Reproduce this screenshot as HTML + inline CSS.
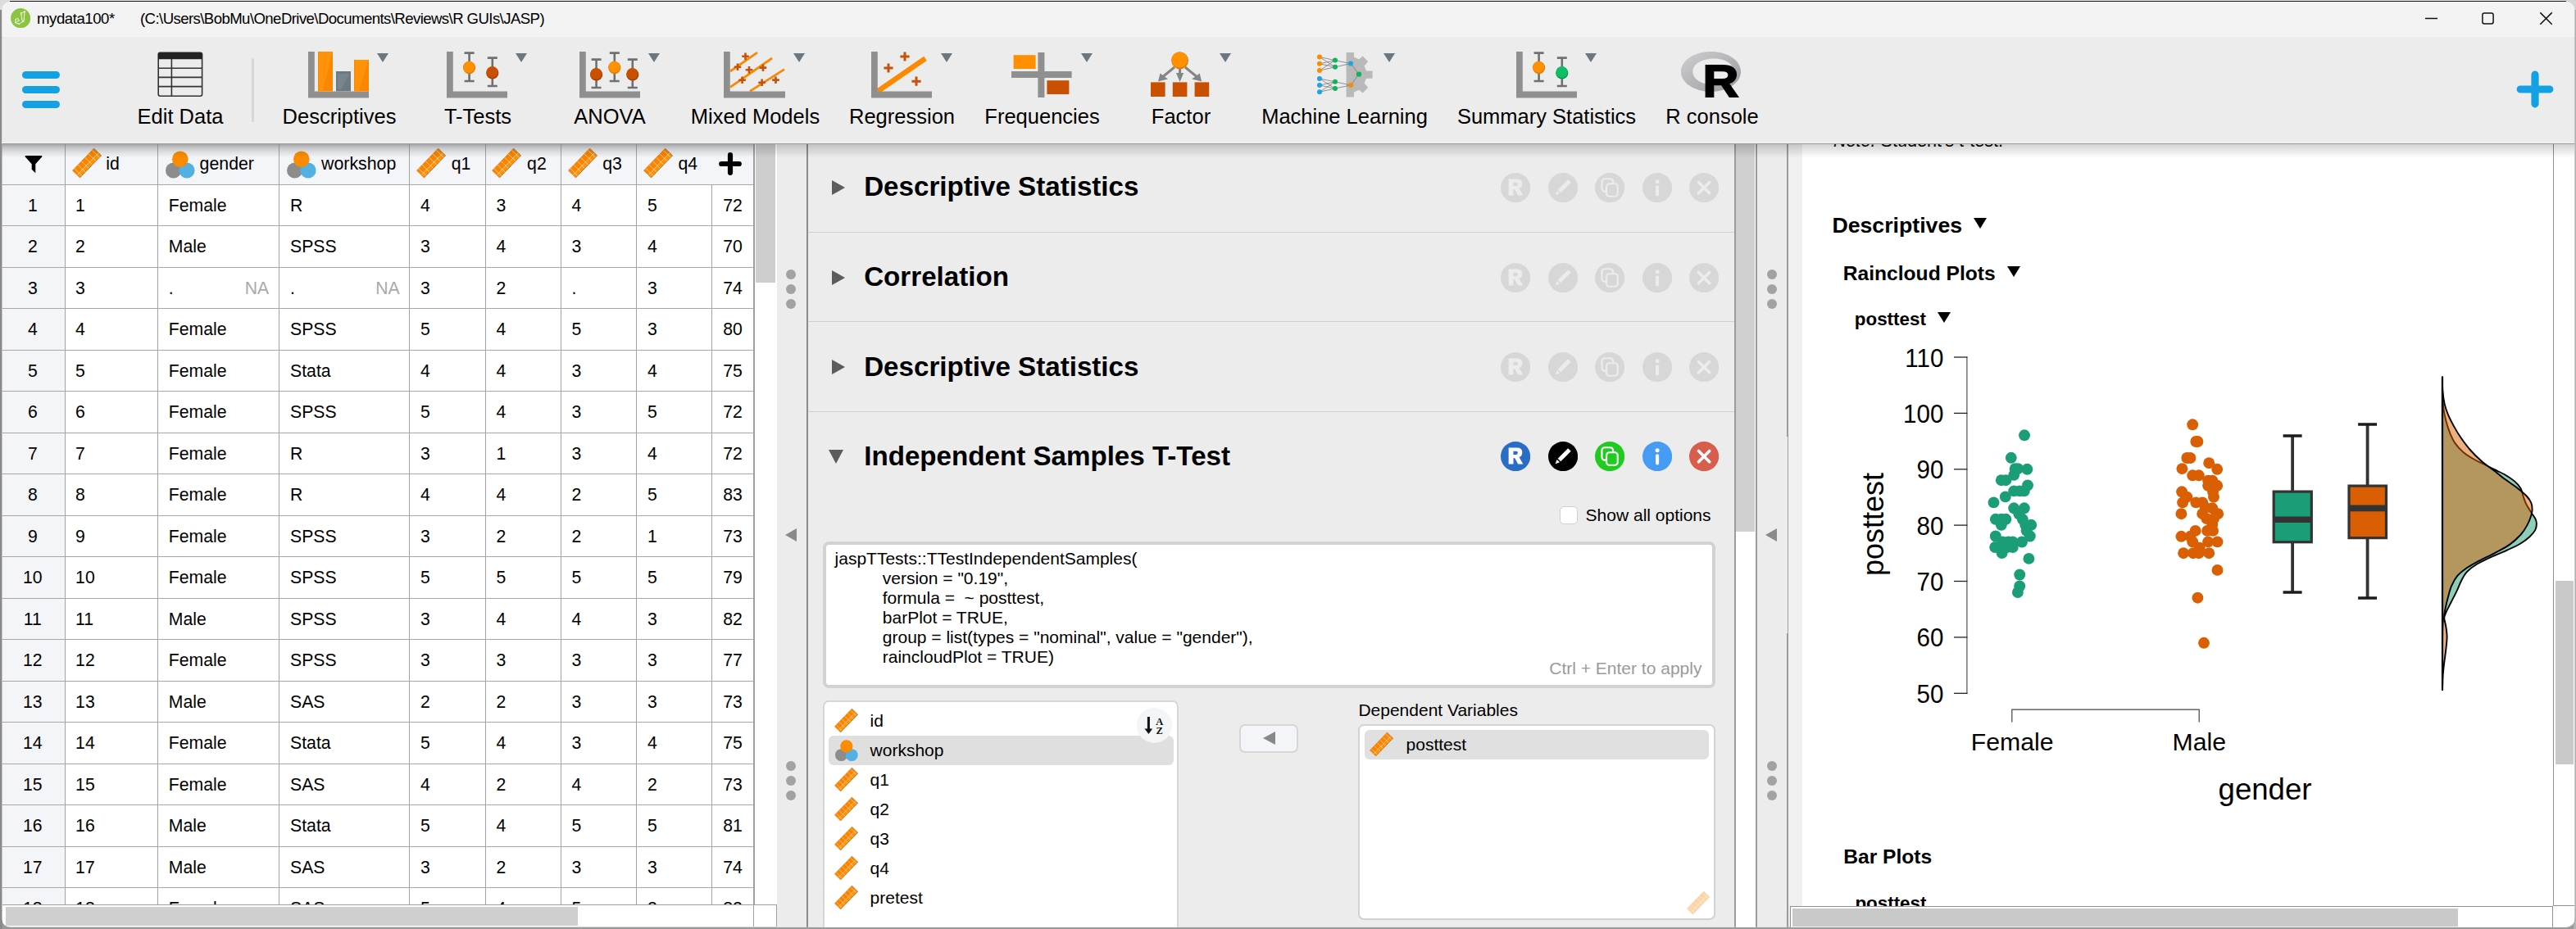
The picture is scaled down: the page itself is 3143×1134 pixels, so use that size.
<!DOCTYPE html>
<html><head><meta charset="utf-8"><title>JASP</title>
<style>
*{box-sizing:border-box;margin:0;padding:0}
html,body{width:3143px;height:1134px;overflow:hidden;background:#9a9a9a;font-family:"Liberation Sans",sans-serif;color:#000}
#win{position:absolute;left:0;top:0;width:3143px;height:1134px;background:#ececec;clip-path:inset(2.1px 1.8px 2.3px 2.4px round 10px);overflow:hidden}
.abs{position:absolute}
svg{display:block}
/* title bar */
#title{position:absolute;left:0;top:0;width:3143px;height:44.7px;background:#f3f3f3}
#title .t{position:absolute;top:11.5px;font-size:18.6px;line-height:22px;white-space:nowrap;color:#000;letter-spacing:-0.45px}
/* ribbon */
#ribbon{position:absolute;left:0;top:46px;width:3143px;height:130.2px;background:#ececec;border-bottom:1.2px solid #999}
.rl{position:absolute;top:81.2px;font-size:25.5px;line-height:30px;white-space:nowrap;transform:translateX(-50%)}
.ri{position:absolute;top:17px}
.tri{position:absolute;top:19.2px;width:0;height:0;border-left:7.6px solid transparent;border-right:7.6px solid transparent;border-top:11.6px solid #6b7882}
/* data */
#data{position:absolute;left:3px;top:176px;width:916.4px;height:928.3px;overflow:hidden;background:#fff}
#data .th{position:absolute;top:0;height:49.2px;background:linear-gradient(#c9cacc 0,#e4e5e8 5px,#f1f2f5 11px,#f4f5f8 16px)}
#data .ico{position:absolute}
#data .hl{position:absolute;top:12px;font-size:21.3px;line-height:24px;white-space:nowrap}
#data .vl{position:absolute;width:1.35px;background:#a3a3a3}
#data .tr{position:absolute;left:0;width:916.4px;height:50.5px;border-top:1.3px solid #a6a6a6}
#data .rn{position:absolute;left:0;top:0;width:76.4px;height:50px;background:#f4f5f8;text-align:center;padding-right:2.8px;font-size:21.2px;line-height:49.8px}
#data .td{position:absolute;top:0;height:50px;padding-left:12.3px;font-size:21.2px;line-height:49.8px;white-space:nowrap}
#data .td.last{padding-left:14.6px}
#data .na{position:absolute;right:12px;top:0;color:#a9a9a9}
.spl{background:#ececec}
.spl i{position:absolute;left:11.4px;width:12px;height:12px;border-radius:6px;background:#a2a2a2}
.spl b{position:absolute;left:9.6px;width:0;height:0;border-top:8.2px solid transparent;border-bottom:8.2px solid transparent;border-right:14.2px solid #8a8a8a}
/* analysis */
#ana{position:absolute;left:985.6px;top:176px;width:1131px;height:958px;background:#ececec;overflow:hidden}
#ana .sec{position:absolute;left:0;width:1131px;height:109.4px;border-bottom:1.5px solid #cfcfcf}
#ana .ttl{position:absolute;left:68.6px;font-size:33.15px;font-weight:bold;line-height:40px;white-space:nowrap}
.tr-r{position:absolute;width:0;height:0;border-top:9.3px solid transparent;border-bottom:9.3px solid transparent;border-left:16.4px solid #5c5c5c}
.tr-d{position:absolute;width:0;height:0;border-left:9.3px solid transparent;border-right:9.3px solid transparent;border-top:17.6px solid #5c5c5c}
.cb{position:absolute;width:36.2px;height:36.2px}
.code{position:absolute;font-size:21px;line-height:24px;white-space:pre}
.vitem{position:absolute;font-size:21px;line-height:24px;white-space:nowrap}
/* results */
#res{position:absolute;left:2182.4px;top:176px;width:933px;height:930.2px;background:#fff;overflow:hidden}
#res .note{left:54.6px;top:-16.2px;font-size:21.6px;line-height:24px;white-space:nowrap}
#res .h1{font-size:26.7px;font-weight:bold;line-height:32px;white-space:nowrap}
#res .h2{font-size:24.6px;font-weight:bold;line-height:30px;white-space:nowrap}
#res .h3{font-size:22.4px;font-weight:bold;line-height:28px;white-space:nowrap}
.tdn{position:absolute;width:0;height:0;border-left:8.4px solid transparent;border-right:8.4px solid transparent;border-top:13px solid #000}

</style></head>
<body>
<svg width="0" height="0" style="position:absolute">
<defs>
<linearGradient id="rg" x1="0" y1="0" x2="1" y2="0"><stop offset="0" stop-color="#ff9a1f"/><stop offset="1" stop-color="#f07c00"/></linearGradient>
<symbol id="ruler" viewBox="0 0 36 36">
 <g transform="rotate(-46 18 18)">
  <rect x="-0.8" y="11.7" width="37.6" height="12.6" fill="#fa8400"/>
  <rect x="-0.8" y="19.6" width="37.6" height="4.7" fill="#ff9106"/>
  <path d="M2.6 11.7V24.3M8.8 11.7V24.3M15 11.7V24.3M21.2 11.7V24.3M27.4 11.7V24.3M33.6 11.7V24.3M-0.8 19.6H36.8" stroke="#fff" stroke-opacity=".62" stroke-width="0.85" fill="none"/>
  <path d="M36.8 11.7V24.3H-0.8" stroke="#5a5a5a" stroke-opacity=".55" stroke-width="0.9" fill="none"/>
  <path d="M-0.8 24.3V11.7H36.8" stroke="#e07600" stroke-opacity=".7" stroke-width="0.7" fill="none"/>
 </g>
</symbol>
<symbol id="nom" viewBox="0 0 36 34">
 <circle cx="9.6" cy="24" r="9.6" fill="#8c8c8c"/>
 <circle cx="26" cy="24" r="9.6" fill="#52b1e2"/>
 <circle cx="17.8" cy="10.2" r="9.8" fill="#fb8c00"/>
</symbol>

<symbol id="bR" viewBox="0 0 36 36"><circle cx="18" cy="18" r="18" fill="var(--bg)"/><path d="M9.6 7.4H19.8Q26.2 7.4 26.2 13.2Q26.2 17.6 22.4 19L27.2 27.4H21L17.2 20.2H15.4V27.4H9.6ZM15.4 11.6V15.8H18.8Q20.8 15.8 20.8 13.7Q20.8 11.6 18.8 11.6Z" fill="var(--fg)" fill-rule="evenodd"/></symbol>
<symbol id="bE" viewBox="0 0 36 36"><circle cx="18" cy="18" r="18" fill="var(--bg)"/><path d="M24 8.2L27.6 11.8L15.2 24.2L11.6 20.6ZM10.6 21.8L14 25.2L8.6 27Z" fill="var(--fg)"/></symbol>
<symbol id="bC" viewBox="0 0 36 36"><circle cx="18" cy="18" r="18" fill="var(--bg)"/><rect x="8.4" y="7.2" width="13.6" height="15.4" rx="3.6" fill="none" stroke="var(--fg)" stroke-width="2.2"/><rect x="14" y="13.2" width="13.6" height="15.4" rx="3.6" fill="var(--bg)" stroke="var(--fg)" stroke-width="2.2"/></symbol>
<symbol id="bI" viewBox="0 0 36 36"><circle cx="18" cy="18" r="18" fill="var(--bg)"/><circle cx="18" cy="10.6" r="2.5" fill="var(--fg)"/><rect x="16" y="15.2" width="4" height="13.2" rx="2" fill="var(--fg)"/></symbol>
<symbol id="bX" viewBox="0 0 36 36"><circle cx="18" cy="18" r="18" fill="var(--bg)"/><path d="M11.4 11.4L24.6 24.6M24.6 11.4L11.4 24.6" stroke="var(--fg)" stroke-width="3.6" stroke-linecap="round"/></symbol>
</defs>
</svg>
<div class="abs" style="left:0;top:0;width:3143px;height:2.4px;background:#f0f0f0"></div><div class="abs" style="left:0;top:0;width:12px;height:12px;background:#dcdcdc"></div><div class="abs" style="left:3131px;top:0;width:12px;height:12px;background:#d6d6d6"></div><div class="abs" style="left:0;top:12px;width:3px;height:1122px;background:#8a8a8a"></div><div class="abs" style="left:3140px;top:12px;width:3px;height:1122px;background:#b2b2b2"></div>
<div id="win">
<div id="title">
<svg class="abs" style="left:12.8px;top:9.8px" width="24.4" height="24.4" viewBox="0 0 24.4 24.4"><circle cx="12.2" cy="12.2" r="12.1" fill="#8bc53f"/><g fill="none" stroke="#fff" stroke-width="0.9" stroke-linejoin="round" stroke-linecap="round"><path d="M17.1 4.2L12.5 6.1L14.4 16.7L10.1 19.3L5.8 17.6L5.8 13.3L9 12.6L10.4 15.4L7.2 16.2"/><path d="M17.1 4.2L16 16L14.4 16.7M12.5 6.1L13.6 7.4"/></g><g fill="#fff"><circle cx="17.1" cy="4.2" r="0.9"/><circle cx="12.5" cy="6.1" r="0.8"/><circle cx="10.1" cy="19.3" r="0.9"/><circle cx="5.8" cy="17.6" r="0.8"/><circle cx="15.6" cy="16.2" r="0.8"/></g></svg>
<div class="t" style="left:45px">mydata100*</div>
<div class="t" style="left:171px;letter-spacing:-0.58px">(C:\Users\BobMu\OneDrive\Documents\Reviews\R GUIs\JASP)</div>
<svg class="abs" style="left:2940px;top:8px" width="190" height="34" viewBox="2940 8 190 34" fill="none" stroke="#111" stroke-width="1.5">
<path d="M2959 22.4H2974"/>
<rect x="3028.9" y="16" width="13.2" height="13" rx="2.2"/>
<path d="M3099.3 15.4L3113.7 29.7M3113.7 15.4L3099.3 29.7"/>
</svg>
</div>
<div id="ribbon">
<!-- hamburger -->
<div class="abs" style="left:27px;top:40.8px;width:45.6px;height:9.2px;border-radius:4.6px;background:#14a1e3"></div>
<div class="abs" style="left:27px;top:59px;width:45.6px;height:9.2px;border-radius:4.6px;background:#14a1e3"></div>
<div class="abs" style="left:27px;top:77.2px;width:45.6px;height:9.2px;border-radius:4.6px;background:#14a1e3"></div>
<!-- Edit data -->
<svg class="ri" style="left:192px" width="56" height="56" viewBox="0 0 56 56"><rect x="1.2" y="1.2" width="53.4" height="53" rx="2.2" fill="#ececec" stroke="#333" stroke-width="1.6"/><path d="M1.2 3.4Q1.2 1.2 3.4 1.2H52.4Q54.6 1.2 54.6 3.4V9.2H1.2Z" fill="#222"/><path d="M17.4 9V54M1.2 20.2H54.6M1.2 31.4H54.6M1.2 42.6H54.6" stroke="#333" stroke-width="1.6" fill="none"/></svg>
<div class="rl" style="left:220px">Edit Data</div>
<div class="abs" style="left:307.2px;top:25px;width:3px;height:78px;border-radius:1.5px;background:#d6d6d6"></div>
<!-- Descriptives -->
<svg class="ri" style="left:376px" width="75" height="57" viewBox="0 0 75 57"><path d="M0 0H7.8V48.4H74V56.4H0Z" fill="#8f8f8f"/><rect x="12" y="0" width="18" height="48.4" fill="#fc8600"/><path d="M13 0H29.5L18 48.4H13Z" fill="#ff9208"/><rect x="34" y="24" width="18" height="24.4" fill="#6e7a82"/><path d="M36 27H50L40 46H36Z" fill="#78858d"/><rect x="56" y="10" width="18" height="38.4" fill="#fc8600"/><path d="M57 10H73.5L62 48.4H57Z" fill="#ff9208"/></svg>
<div class="tri" style="left:460px"></div>
<div class="rl" style="left:414px">Descriptives</div>
<!-- T-Tests -->
<svg class="ri" style="left:545px" width="75" height="57" viewBox="0 0 75 57"><path d="M0 0H7.8V48.4H74V56.4H0Z" fill="#8f8f8f"/><g stroke="#707070" stroke-width="2.6" fill="none"><path d="M21.6 1.6H33.6M27.6 1.6V36M21.6 36H33.6"/><path d="M49.8 7.6H61.8M55.8 7.6V42M49.8 42H61.8"/></g><circle cx="27.6" cy="19.6" r="7.6" fill="#e07a00"/><circle cx="27.3" cy="18.8" r="7" fill="#ff9000"/><circle cx="55.8" cy="26" r="7.6" fill="#a83a00"/><circle cx="55.5" cy="25" r="7" fill="#c85000"/></svg>
<div class="tri" style="left:629px"></div>
<div class="rl" style="left:583px">T-Tests</div>
<!-- ANOVA -->
<svg class="ri" style="left:707px" width="75" height="57" viewBox="0 0 75 57"><path d="M0 0H7.8V48.4H74V56.4H0Z" fill="#8f8f8f"/><g stroke="#707070" stroke-width="2.6" fill="none"><path d="M14.6 9.6H26.6M20.6 9.6V44M14.6 44H26.6"/><path d="M36.8 1.6H48.8M42.8 1.6V36M36.8 36H48.8"/><path d="M58.8 9.6H70.8M64.8 9.6V44M58.8 44H70.8"/></g><circle cx="20.6" cy="28" r="7.6" fill="#a83a00"/><circle cx="20.3" cy="27" r="7" fill="#c85000"/><circle cx="42.8" cy="19.6" r="7.6" fill="#e07a00"/><circle cx="42.5" cy="18.8" r="7" fill="#ff9000"/><circle cx="64.8" cy="28" r="7.6" fill="#a83a00"/><circle cx="64.5" cy="27" r="7" fill="#c85000"/></svg>
<div class="tri" style="left:791px"></div>
<div class="rl" style="left:744px">ANOVA</div>
<!-- Mixed Models -->
<svg class="ri" style="left:883px" width="76" height="57" viewBox="0 0 76 57"><g stroke="#fa8800" stroke-width="2.8" fill="none"><path d="M8 24L41 1.2M8 43.4L59 8M32 48.4L74 21.6"/></g><g stroke="#c4520a" stroke-width="2.6" fill="none"><path d="M26.5 1.5V10M22.2 5.8H30.8M17 14.5V23M12.7 18.8H21.3M31 18V26.5M26.7 22.3H35.3M48 15.4V23.9M43.7 19.6H52.3M22.6 30.6V39.1M18.3 34.8H26.9M46.6 33.6V42.1M42.3 37.8H50.9M63.5 30.4V38.9M59.2 34.6H67.8"/></g><path d="M0 0H7.8V48.4H75V56.4H0Z" fill="#8f8f8f"/></svg>
<div class="tri" style="left:968px"></div>
<div class="rl" style="left:921.5px">Mixed Models</div>
<!-- Regression -->
<svg class="ri" style="left:1063px" width="75" height="57" viewBox="0 0 75 57"><path d="M8 48.4L66 8.4" stroke="#fb8a00" stroke-width="6.4" fill="none"/><g stroke="#c4520a" stroke-width="3" fill="none"><path d="M41 0.4V11.6M35.4 6H46.6M21 14.4V25.6M15.4 20H26.6M55 30.6V41.8M49.4 36.2H60.6"/></g><path d="M0 0H7.8V48.4H74V56.4H0Z" fill="#8f8f8f"/></svg>
<div class="tri" style="left:1148px"></div>
<div class="rl" style="left:1100.5px">Regression</div>
<!-- Frequencies -->
<svg class="ri" style="left:1234px" width="75" height="57" viewBox="0 0 75 57"><rect x="2.6" y="4.2" width="27" height="16.8" fill="#ff8f00"/><rect x="43.4" y="35.2" width="27" height="16.8" fill="#c85000"/><path d="M32.4 1H40.4V56H32.4ZM0 24H73.6V32H0Z" fill="#8f8f8f"/></svg>
<div class="tri" style="left:1318.5px"></div>
<div class="rl" style="left:1271.5px">Frequencies</div>
<!-- Factor -->
<svg class="ri" style="left:1403px" width="75" height="57" viewBox="0 0 75 57"><g stroke="#858585" stroke-width="3" fill="none"><path d="M30 19L13 33M36.6 19V33M43 19L60 33"/></g><g fill="#858585"><path d="M10 36.5L12.5 26.5L22 33.5Z"/><path d="M36.6 37L32 26H41.2Z"/><path d="M63.2 36.5L60.7 26.5L51.2 33.5Z"/></g><circle cx="36.6" cy="10.8" r="10.4" fill="#e07a00"/><circle cx="36.2" cy="10" r="9.8" fill="#ff9000"/><rect x="1" y="37.4" width="17.6" height="17.6" fill="#c85000"/><rect x="27.8" y="37.4" width="17.6" height="17.6" fill="#c85000"/><rect x="54.6" y="37.4" width="17.6" height="17.6" fill="#c85000"/></svg>
<div class="tri" style="left:1487.5px"></div>
<div class="rl" style="left:1441px">Factor</div>
<!-- Machine Learning -->
<svg class="ri" style="left:1606px" width="72" height="57" viewBox="0 0 72 57"><path d="M36.6 1H46V6.6L52 9.4L56.6 5.6L63.2 12.2L58.6 17.6L61 23.4H68.6V32.8H61L58.6 38.6L63.2 44L56.6 50.6L52 46.8L46 49.6V55.4H36.6Z" fill="#b9b9b9"/><g stroke="#777" stroke-width="0.8" fill="none"><path d="M4 6.6L23 10.6L42 14.6M4 6.6L23 18.8M4 14.8L23 10.6M4 14.8L23 18.8L42 14.6M4 23L23 10.6M4 23L23 18.8M4 33L23 36.8L42 41M4 33L23 45M4 41L23 36.8M4 41L23 45L42 41M4 49.2L23 36.8M4 49.2L23 45M42 14.6L52 27.6L42 41"/></g><g fill="#fb8c00"><circle cx="4" cy="6.6" r="3"/><circle cx="4" cy="14.8" r="3"/><circle cx="4" cy="23" r="3"/><circle cx="42" cy="41" r="3"/></g><g fill="#1fa3e6"><circle cx="4" cy="33" r="3"/><circle cx="4" cy="41" r="3"/><circle cx="4" cy="49.2" r="3"/><circle cx="42" cy="14.6" r="3"/></g><g fill="#0fb35a"><circle cx="23" cy="10.6" r="3"/><circle cx="23" cy="18.8" r="3"/><circle cx="23" cy="36.8" r="3"/><circle cx="23" cy="45" r="3"/><circle cx="52" cy="27.6" r="3.2"/></g></svg>
<div class="tri" style="left:1688px"></div>
<div class="rl" style="left:1640.5px">Machine Learning</div>
<!-- Summary Statistics -->
<svg class="ri" style="left:1850px" width="75" height="57" viewBox="0 0 75 57"><path d="M0 0H7.8V48.4H74V56.4H0Z" fill="#8f8f8f"/><g stroke="#707070" stroke-width="2.6" fill="none"><path d="M21.6 1.6H33.6M27.6 1.6V36M21.6 36H33.6"/><path d="M49.8 7.6H61.8M55.8 7.6V42M49.8 42H61.8"/></g><circle cx="27.6" cy="19.6" r="7.6" fill="#e07a00"/><circle cx="27.3" cy="18.8" r="7" fill="#ff9000"/><circle cx="55.8" cy="26" r="7.6" fill="#00994a"/><circle cx="55.5" cy="25" r="7" fill="#0fbd63"/></svg>
<div class="tri" style="left:1934px"></div>
<div class="rl" style="left:1887px">Summary Statistics</div>
<!-- R console -->
<svg class="ri" style="left:2051px" width="74" height="57" viewBox="0 0 74 57"><defs><linearGradient id="rgr" x1="0" y1="0" x2="1" y2="1"><stop offset="0" stop-color="#cfcfd1"/><stop offset="1" stop-color="#9b9ba0"/></linearGradient></defs><path fill-rule="evenodd" d="M36.5 0C56.6 0 73 10.6 73 24.4C73 38.2 56.6 48.8 36.5 48.8C16.4 48.8 0 38.2 0 24.4C0 10.6 16.4 0 36.5 0ZM40 8.6C26 8.6 14.4 15.2 14.4 24.6C14.4 34 26 40.6 40 40.6C54 40.6 64 34 64 24.6C64 15.2 54 8.6 40 8.6Z" fill="url(#rgr)"/><text x="26.6" y="55.4" font-family="Liberation Sans, sans-serif" font-weight="bold" font-size="56" fill="#000" stroke="#000" stroke-width="1.8" stroke-linejoin="miter" textLength="44" lengthAdjust="spacingAndGlyphs">R</text></svg>
<div class="rl" style="left:2089px">R console</div>
<!-- plus -->
<svg class="abs" style="left:3065.9px;top:36.4px" width="54" height="54" viewBox="0 0 54 54"><path d="M27 9.2V44.8M9.2 27H44.8" stroke="#14a1e3" stroke-width="9.2" stroke-linecap="round"/></svg>
</div>
<div id="data">
<div class="th" style="left:0;width:916.4px"></div>
<svg class="ico" style="left:27.0px;top:14.0px" width="22" height="22" viewBox="0 0 22 22"><path d="M0.6 1.2 Q0.2 0 1.6 0 H20.4 Q21.8 0 21.4 1.2 L13.3 10.2 V21.3 L8.7 16.8 V10.2 Z" fill="#000"/></svg>
<svg class="ico" style="left:84.8px;top:5px" width="36" height="36"><use href="#ruler"/></svg>
<div class="hl" style="left:126.2px">id</div>
<svg class="ico" style="left:199.4px;top:7.8px" width="36" height="34"><use href="#nom"/></svg>
<div class="hl" style="left:240.6px">gender</div>
<svg class="ico" style="left:347.0px;top:7.8px" width="36" height="34"><use href="#nom"/></svg>
<div class="hl" style="left:389.1px">workshop</div>
<svg class="ico" style="left:505.0px;top:5px" width="36" height="36"><use href="#ruler"/></svg>
<div class="hl" style="left:547.7px">q1</div>
<svg class="ico" style="left:597.4px;top:5px" width="36" height="36"><use href="#ruler"/></svg>
<div class="hl" style="left:640.1px">q2</div>
<svg class="ico" style="left:689.8px;top:5px" width="36" height="36"><use href="#ruler"/></svg>
<div class="hl" style="left:732.2px">q3</div>
<svg class="ico" style="left:781.8px;top:5px" width="36" height="36"><use href="#ruler"/></svg>
<div class="hl" style="left:824.5px">q4</div>
<svg class="ico" style="left:873.8px;top:10.2px" width="28" height="28" viewBox="0 0 28 28"><path d="M14 3.2V24.8M3.2 14H24.8" stroke="#000" stroke-width="6.2" stroke-linecap="round"/></svg>
<div class="vl" style="left:76.0px;top:0;height:48.8px"></div>
<div class="vl" style="left:189.0px;top:0;height:48.8px"></div>
<div class="vl" style="left:337.0px;top:0;height:48.8px"></div>
<div class="vl" style="left:496.0px;top:0;height:48.8px"></div>
<div class="vl" style="left:589.0px;top:0;height:48.8px"></div>
<div class="vl" style="left:681.0px;top:0;height:48.8px"></div>
<div class="vl" style="left:773.0px;top:0;height:48.8px"></div>
<div class="tr" style="top:48.80px">
<div class="rn">1</div>
<div class="td" style="left:76.8px;width:113.2px">1</div>
<div class="td" style="left:190.5px;width:147.6px">Female</div>
<div class="td" style="left:338.8px;width:159.4px">R</div>
<div class="td" style="left:497.6px;width:92.4px">4</div>
<div class="td" style="left:590.1px;width:92.4px">3</div>
<div class="td" style="left:682.3px;width:92.0px">4</div>
<div class="td" style="left:774.7px;width:91.8px">5</div>
<div class="td last" style="left:864.6px;width:51.2px">72</div>
</div>
<div class="tr" style="top:99.30px">
<div class="rn">2</div>
<div class="td" style="left:76.8px;width:113.2px">2</div>
<div class="td" style="left:190.5px;width:147.6px">Male</div>
<div class="td" style="left:338.8px;width:159.4px">SPSS</div>
<div class="td" style="left:497.6px;width:92.4px">3</div>
<div class="td" style="left:590.1px;width:92.4px">4</div>
<div class="td" style="left:682.3px;width:92.0px">3</div>
<div class="td" style="left:774.7px;width:91.8px">4</div>
<div class="td last" style="left:864.6px;width:51.2px">70</div>
</div>
<div class="tr" style="top:149.80px">
<div class="rn">3</div>
<div class="td" style="left:76.8px;width:113.2px">3</div>
<div class="td" style="left:190.5px;width:146.7px">.<span class="na">NA</span></div>
<div class="td" style="left:338.8px;width:157.8px">.<span class="na">NA</span></div>
<div class="td" style="left:497.6px;width:92.4px">3</div>
<div class="td" style="left:590.1px;width:92.4px">2</div>
<div class="td" style="left:682.3px;width:92.0px">.</div>
<div class="td" style="left:774.7px;width:91.8px">3</div>
<div class="td last" style="left:864.6px;width:51.2px">74</div>
</div>
<div class="tr" style="top:200.30px">
<div class="rn">4</div>
<div class="td" style="left:76.8px;width:113.2px">4</div>
<div class="td" style="left:190.5px;width:147.6px">Female</div>
<div class="td" style="left:338.8px;width:159.4px">SPSS</div>
<div class="td" style="left:497.6px;width:92.4px">5</div>
<div class="td" style="left:590.1px;width:92.4px">4</div>
<div class="td" style="left:682.3px;width:92.0px">5</div>
<div class="td" style="left:774.7px;width:91.8px">3</div>
<div class="td last" style="left:864.6px;width:51.2px">80</div>
</div>
<div class="tr" style="top:250.80px">
<div class="rn">5</div>
<div class="td" style="left:76.8px;width:113.2px">5</div>
<div class="td" style="left:190.5px;width:147.6px">Female</div>
<div class="td" style="left:338.8px;width:159.4px">Stata</div>
<div class="td" style="left:497.6px;width:92.4px">4</div>
<div class="td" style="left:590.1px;width:92.4px">4</div>
<div class="td" style="left:682.3px;width:92.0px">3</div>
<div class="td" style="left:774.7px;width:91.8px">4</div>
<div class="td last" style="left:864.6px;width:51.2px">75</div>
</div>
<div class="tr" style="top:301.30px">
<div class="rn">6</div>
<div class="td" style="left:76.8px;width:113.2px">6</div>
<div class="td" style="left:190.5px;width:147.6px">Female</div>
<div class="td" style="left:338.8px;width:159.4px">SPSS</div>
<div class="td" style="left:497.6px;width:92.4px">5</div>
<div class="td" style="left:590.1px;width:92.4px">4</div>
<div class="td" style="left:682.3px;width:92.0px">3</div>
<div class="td" style="left:774.7px;width:91.8px">5</div>
<div class="td last" style="left:864.6px;width:51.2px">72</div>
</div>
<div class="tr" style="top:351.80px">
<div class="rn">7</div>
<div class="td" style="left:76.8px;width:113.2px">7</div>
<div class="td" style="left:190.5px;width:147.6px">Female</div>
<div class="td" style="left:338.8px;width:159.4px">R</div>
<div class="td" style="left:497.6px;width:92.4px">3</div>
<div class="td" style="left:590.1px;width:92.4px">1</div>
<div class="td" style="left:682.3px;width:92.0px">3</div>
<div class="td" style="left:774.7px;width:91.8px">4</div>
<div class="td last" style="left:864.6px;width:51.2px">72</div>
</div>
<div class="tr" style="top:402.30px">
<div class="rn">8</div>
<div class="td" style="left:76.8px;width:113.2px">8</div>
<div class="td" style="left:190.5px;width:147.6px">Female</div>
<div class="td" style="left:338.8px;width:159.4px">R</div>
<div class="td" style="left:497.6px;width:92.4px">4</div>
<div class="td" style="left:590.1px;width:92.4px">4</div>
<div class="td" style="left:682.3px;width:92.0px">2</div>
<div class="td" style="left:774.7px;width:91.8px">5</div>
<div class="td last" style="left:864.6px;width:51.2px">83</div>
</div>
<div class="tr" style="top:452.80px">
<div class="rn">9</div>
<div class="td" style="left:76.8px;width:113.2px">9</div>
<div class="td" style="left:190.5px;width:147.6px">Female</div>
<div class="td" style="left:338.8px;width:159.4px">SPSS</div>
<div class="td" style="left:497.6px;width:92.4px">3</div>
<div class="td" style="left:590.1px;width:92.4px">2</div>
<div class="td" style="left:682.3px;width:92.0px">2</div>
<div class="td" style="left:774.7px;width:91.8px">1</div>
<div class="td last" style="left:864.6px;width:51.2px">73</div>
</div>
<div class="tr" style="top:503.30px">
<div class="rn">10</div>
<div class="td" style="left:76.8px;width:113.2px">10</div>
<div class="td" style="left:190.5px;width:147.6px">Female</div>
<div class="td" style="left:338.8px;width:159.4px">SPSS</div>
<div class="td" style="left:497.6px;width:92.4px">5</div>
<div class="td" style="left:590.1px;width:92.4px">5</div>
<div class="td" style="left:682.3px;width:92.0px">5</div>
<div class="td" style="left:774.7px;width:91.8px">5</div>
<div class="td last" style="left:864.6px;width:51.2px">79</div>
</div>
<div class="tr" style="top:553.80px">
<div class="rn">11</div>
<div class="td" style="left:76.8px;width:113.2px">11</div>
<div class="td" style="left:190.5px;width:147.6px">Male</div>
<div class="td" style="left:338.8px;width:159.4px">SPSS</div>
<div class="td" style="left:497.6px;width:92.4px">3</div>
<div class="td" style="left:590.1px;width:92.4px">4</div>
<div class="td" style="left:682.3px;width:92.0px">4</div>
<div class="td" style="left:774.7px;width:91.8px">3</div>
<div class="td last" style="left:864.6px;width:51.2px">82</div>
</div>
<div class="tr" style="top:604.30px">
<div class="rn">12</div>
<div class="td" style="left:76.8px;width:113.2px">12</div>
<div class="td" style="left:190.5px;width:147.6px">Female</div>
<div class="td" style="left:338.8px;width:159.4px">SPSS</div>
<div class="td" style="left:497.6px;width:92.4px">3</div>
<div class="td" style="left:590.1px;width:92.4px">3</div>
<div class="td" style="left:682.3px;width:92.0px">3</div>
<div class="td" style="left:774.7px;width:91.8px">3</div>
<div class="td last" style="left:864.6px;width:51.2px">77</div>
</div>
<div class="tr" style="top:654.80px">
<div class="rn">13</div>
<div class="td" style="left:76.8px;width:113.2px">13</div>
<div class="td" style="left:190.5px;width:147.6px">Male</div>
<div class="td" style="left:338.8px;width:159.4px">SAS</div>
<div class="td" style="left:497.6px;width:92.4px">2</div>
<div class="td" style="left:590.1px;width:92.4px">2</div>
<div class="td" style="left:682.3px;width:92.0px">3</div>
<div class="td" style="left:774.7px;width:91.8px">3</div>
<div class="td last" style="left:864.6px;width:51.2px">73</div>
</div>
<div class="tr" style="top:705.30px">
<div class="rn">14</div>
<div class="td" style="left:76.8px;width:113.2px">14</div>
<div class="td" style="left:190.5px;width:147.6px">Female</div>
<div class="td" style="left:338.8px;width:159.4px">Stata</div>
<div class="td" style="left:497.6px;width:92.4px">5</div>
<div class="td" style="left:590.1px;width:92.4px">4</div>
<div class="td" style="left:682.3px;width:92.0px">3</div>
<div class="td" style="left:774.7px;width:91.8px">4</div>
<div class="td last" style="left:864.6px;width:51.2px">75</div>
</div>
<div class="tr" style="top:755.80px">
<div class="rn">15</div>
<div class="td" style="left:76.8px;width:113.2px">15</div>
<div class="td" style="left:190.5px;width:147.6px">Female</div>
<div class="td" style="left:338.8px;width:159.4px">SAS</div>
<div class="td" style="left:497.6px;width:92.4px">4</div>
<div class="td" style="left:590.1px;width:92.4px">2</div>
<div class="td" style="left:682.3px;width:92.0px">4</div>
<div class="td" style="left:774.7px;width:91.8px">2</div>
<div class="td last" style="left:864.6px;width:51.2px">73</div>
</div>
<div class="tr" style="top:806.30px">
<div class="rn">16</div>
<div class="td" style="left:76.8px;width:113.2px">16</div>
<div class="td" style="left:190.5px;width:147.6px">Male</div>
<div class="td" style="left:338.8px;width:159.4px">Stata</div>
<div class="td" style="left:497.6px;width:92.4px">5</div>
<div class="td" style="left:590.1px;width:92.4px">4</div>
<div class="td" style="left:682.3px;width:92.0px">5</div>
<div class="td" style="left:774.7px;width:91.8px">5</div>
<div class="td last" style="left:864.6px;width:51.2px">81</div>
</div>
<div class="tr" style="top:856.80px">
<div class="rn">17</div>
<div class="td" style="left:76.8px;width:113.2px">17</div>
<div class="td" style="left:190.5px;width:147.6px">Male</div>
<div class="td" style="left:338.8px;width:159.4px">SAS</div>
<div class="td" style="left:497.6px;width:92.4px">3</div>
<div class="td" style="left:590.1px;width:92.4px">2</div>
<div class="td" style="left:682.3px;width:92.0px">3</div>
<div class="td" style="left:774.7px;width:91.8px">3</div>
<div class="td last" style="left:864.6px;width:51.2px">74</div>
</div>
<div class="tr" style="top:907.30px">
<div class="rn">18</div>
<div class="td" style="left:76.8px;width:113.2px">18</div>
<div class="td" style="left:190.5px;width:147.6px">Female</div>
<div class="td" style="left:338.8px;width:159.4px">SAS</div>
<div class="td" style="left:497.6px;width:92.4px">5</div>
<div class="td" style="left:590.1px;width:92.4px">4</div>
<div class="td" style="left:682.3px;width:92.0px">5</div>
<div class="td" style="left:774.7px;width:91.8px">2</div>
<div class="td last" style="left:864.6px;width:51.2px">82</div>
</div>
<div class="vl" style="left:76.0px;top:48.8px;height:900px"></div>
<div class="vl" style="left:189.0px;top:48.8px;height:900px"></div>
<div class="vl" style="left:337.0px;top:48.8px;height:900px"></div>
<div class="vl" style="left:496.0px;top:48.8px;height:900px"></div>
<div class="vl" style="left:589.0px;top:48.8px;height:900px"></div>
<div class="vl" style="left:681.0px;top:48.8px;height:900px"></div>
<div class="vl" style="left:773.0px;top:48.8px;height:900px"></div>
<div class="vl" style="left:865.0px;top:48.8px;height:900px"></div>
</div>
<!-- data scrollbars -->
<div class="abs" style="left:919.2px;top:176px;width:29.4px;height:928.3px;background:#fff;border-left:2px solid #9e9e9e;border-right:1.7px solid #9e9e9e"></div>
<div class="abs" style="left:921.8px;top:176px;width:24.2px;height:169px;background:#cdcdcd"></div>
<div class="abs" style="left:3px;top:1104.3px;width:945px;height:27px;background:#fff;border-top:1.6px solid #a0a0a0"></div>
<div class="abs" style="left:6.5px;top:1107px;width:698px;height:22.5px;background:#cfcfcf"></div>
<div class="abs" style="left:919.4px;top:1104.3px;width:28.6px;height:27px;background:#fff;border-left:1.6px solid #a0a0a0;border-right:1.6px solid #a0a0a0;border-top:1.6px solid #a0a0a0"></div>
<!-- splitter 1 -->
<div class="abs spl" style="left:948px;top:176px;width:37.8px;height:958px;border-right:2px solid #8c8c8c">
 <i style="top:153px"></i><i style="top:171.2px"></i><i style="top:188.8px"></i>
 <b style="top:468.9px"></b>
 <i style="top:752.5px"></i><i style="top:770.7px"></i><i style="top:788.5px"></i>
</div>
<div id="ana">
<div class="abs" style="left:0;top:106.8px;width:1131px;height:1.3px;background:#d0d0d0"></div>
<div class="tr-r" style="left:29.1px;top:43.9px"></div>
<div class="ttl" style="top:32.2px">Descriptive Statistics</div>
<svg class="cb" style="left:845.2px;top:34.7px;--bg:#d7d7d7;--fg:#ececec"><use href="#bR"/></svg>
<svg class="cb" style="left:903.2px;top:34.7px;--bg:#d7d7d7;--fg:#ececec"><use href="#bE"/></svg>
<svg class="cb" style="left:960.5px;top:34.7px;--bg:#d7d7d7;--fg:#ececec"><use href="#bC"/></svg>
<svg class="cb" style="left:1018.3px;top:34.7px;--bg:#d7d7d7;--fg:#ececec"><use href="#bI"/></svg>
<svg class="cb" style="left:1075.5px;top:34.7px;--bg:#d7d7d7;--fg:#ececec"><use href="#bX"/></svg>
<div class="abs" style="left:0;top:216.1px;width:1131px;height:1.3px;background:#d0d0d0"></div>
<div class="tr-r" style="left:29.1px;top:153.7px"></div>
<div class="ttl" style="top:142.0px">Correlation</div>
<svg class="cb" style="left:845.2px;top:144.5px;--bg:#d7d7d7;--fg:#ececec"><use href="#bR"/></svg>
<svg class="cb" style="left:903.2px;top:144.5px;--bg:#d7d7d7;--fg:#ececec"><use href="#bE"/></svg>
<svg class="cb" style="left:960.5px;top:144.5px;--bg:#d7d7d7;--fg:#ececec"><use href="#bC"/></svg>
<svg class="cb" style="left:1018.3px;top:144.5px;--bg:#d7d7d7;--fg:#ececec"><use href="#bI"/></svg>
<svg class="cb" style="left:1075.5px;top:144.5px;--bg:#d7d7d7;--fg:#ececec"><use href="#bX"/></svg>
<div class="abs" style="left:0;top:325.6px;width:1131px;height:1.3px;background:#d0d0d0"></div>
<div class="tr-r" style="left:29.1px;top:263.2px"></div>
<div class="ttl" style="top:251.5px">Descriptive Statistics</div>
<svg class="cb" style="left:845.2px;top:254.0px;--bg:#d7d7d7;--fg:#ececec"><use href="#bR"/></svg>
<svg class="cb" style="left:903.2px;top:254.0px;--bg:#d7d7d7;--fg:#ececec"><use href="#bE"/></svg>
<svg class="cb" style="left:960.5px;top:254.0px;--bg:#d7d7d7;--fg:#ececec"><use href="#bC"/></svg>
<svg class="cb" style="left:1018.3px;top:254.0px;--bg:#d7d7d7;--fg:#ececec"><use href="#bI"/></svg>
<svg class="cb" style="left:1075.5px;top:254.0px;--bg:#d7d7d7;--fg:#ececec"><use href="#bX"/></svg>
<div class="tr-d" style="left:25.2px;top:372.8px"></div>
<div class="ttl" style="top:361.2px">Independent Samples T-Test</div>
<svg class="cb" style="left:845.2px;top:363.2px;--bg:#2a6dc4;--fg:#fff"><use href="#bR"/></svg>
<svg class="cb" style="left:903.2px;top:363.2px;--bg:#000;--fg:#fff"><use href="#bE"/></svg>
<svg class="cb" style="left:960.5px;top:363.2px;--bg:#1fcb1f;--fg:#fff"><use href="#bC"/></svg>
<svg class="cb" style="left:1018.3px;top:363.2px;--bg:#469cf4;--fg:#fff"><use href="#bI"/></svg>
<svg class="cb" style="left:1075.5px;top:363.2px;--bg:#d95d4d;--fg:#fff"><use href="#bX"/></svg>
<div class="abs" style="left:917.0px;top:441.6px;width:22.4px;height:22.4px;border:1.4px solid #cfcfcf;border-radius:5px;background:#fff"></div>
<div class="vitem" style="left:949.0px;top:440.5px;font-size:21px">Show all options</div>
<div class="abs" style="left:18.2px;top:484.5px;width:1088.8px;height:179.4px;border:4.6px solid #d2d2d2;border-radius:7.5px;background:#fff"></div>
<div class="code" style="left:33.0px;top:494.0px">jaspTTests::TTestIndependentSamples(</div>
<div class="code" style="left:91.2px;top:518.0px">version = &quot;0.19&quot;,</div>
<div class="code" style="left:91.2px;top:542.0px">formula =  ~ posttest,</div>
<div class="code" style="left:91.2px;top:566.0px">barPlot = TRUE,</div>
<div class="code" style="left:91.2px;top:590.0px">group = list(types = &quot;nominal&quot;, value = &quot;gender&quot;),</div>
<div class="code" style="left:91.2px;top:614.0px">raincloudPlot = TRUE)</div>
<div class="code" style="right:40.2px;top:627.6px;color:#9a9a9a">Ctrl + Enter to apply</div>
<div class="abs" style="left:18.1px;top:679.3px;width:434px;height:300px;border:2.4px solid #d6d6d6;border-radius:7px;background:#fff"></div>
<div class="abs" style="left:25.5px;top:722.3px;width:420.7px;height:35.3px;border-radius:6px;background:#dfdfdf"></div>
<svg class="abs" style="left:32.8px;top:688.8px" width="29" height="29"><use href="#ruler"/></svg>
<div class="vitem" style="left:76.0px;top:691.9px">id</div>
<svg class="abs" style="left:33.9px;top:727.4px" width="28" height="26.4"><use href="#nom"/></svg>
<div class="vitem" style="left:76.0px;top:727.9px">workshop</div>
<svg class="abs" style="left:32.8px;top:760.8px" width="29" height="29"><use href="#ruler"/></svg>
<div class="vitem" style="left:76.0px;top:763.9px">q1</div>
<svg class="abs" style="left:32.8px;top:796.8px" width="29" height="29"><use href="#ruler"/></svg>
<div class="vitem" style="left:76.0px;top:799.9px">q2</div>
<svg class="abs" style="left:32.8px;top:832.8px" width="29" height="29"><use href="#ruler"/></svg>
<div class="vitem" style="left:76.0px;top:835.9px">q3</div>
<svg class="abs" style="left:32.8px;top:868.8px" width="29" height="29"><use href="#ruler"/></svg>
<div class="vitem" style="left:76.0px;top:871.9px">q4</div>
<svg class="abs" style="left:32.8px;top:904.8px" width="29" height="29"><use href="#ruler"/></svg>
<div class="vitem" style="left:76.0px;top:907.9px">pretest</div>
<svg class="abs" style="left:401.0px;top:688.2px" width="43" height="43" viewBox="0 0 43 43"><circle cx="21.5" cy="21.5" r="21.5" fill="#f4f5f7"/><path d="M14.4 11V27" fill="none" stroke="#111" stroke-width="3"/><path d="M9.6 25.4H19.2L14.4 32Z" fill="#111"/><text x="23.2" y="20.6" font-family="Liberation Serif, serif" font-weight="bold" font-size="12.5" fill="#111">A</text><text x="23.6" y="32" font-family="Liberation Serif, serif" font-weight="bold" font-size="12.5" fill="#111">Z</text></svg>
<div class="abs" style="left:526.8px;top:707.8px;width:71.8px;height:35.4px;border:2px solid #d6d6d6;border-radius:7px;background:#f4f5f8"></div>
<div class="abs" style="left:555.0px;top:717.2px;width:0;height:0;border-top:8.2px solid transparent;border-bottom:8.2px solid transparent;border-right:15px solid #888"></div>
<div class="vitem" style="left:671.8px;top:678.6px">Dependent Variables</div>
<div class="abs" style="left:671.8px;top:708.2px;width:435.2px;height:239.2px;border:2.5px solid #d2d2d2;border-radius:7px;background:#fff"></div>
<div class="abs" style="left:679.4px;top:714.9px;width:420.4px;height:36px;border-radius:6px;background:#e0e0e0"></div>
<svg class="abs" style="left:685.8px;top:717.6px" width="29" height="29"><use href="#ruler"/></svg>
<div class="vitem" style="left:730.0px;top:721.1px">posttest</div>
<svg class="abs" style="left:1072.0px;top:911.6px;opacity:.35" width="28" height="28"><use href="#ruler"/></svg>
</div>
<div class="abs" style="left:2115.6px;top:176px;width:28.6px;height:958px;background:#fff;border-left:2px solid #9b9b9b;border-right:2px solid #9b9b9b"></div>
<div class="abs" style="left:2117.6px;top:176px;width:23.6px;height:472.8px;background:#d0d0d0"></div>
<div class="abs" style="left:2179.8px;top:176px;width:2.6px;height:356.7px;background:#9c9c9c;z-index:2"></div>
<div class="abs" style="left:2179.8px;top:772.7px;width:2.6px;height:362px;background:#9c9c9c;z-index:2"></div>
<div class="abs spl" style="left:2144.2px;top:176px;width:38.2px;height:958px;border-right:1.3px solid #a2a2a2">
 <i style="top:153px"></i><i style="top:171.2px"></i><i style="top:188.8px"></i>
 <b style="top:468.9px"></b>
 <i style="top:752.5px"></i><i style="top:770.7px"></i><i style="top:788.5px"></i>
</div>
<div id="res">
<div class="abs" style="left:0;top:0;width:17px;height:958px;background:#f0f0f0"></div>
<div class="abs note"><i>Note.</i> Student's t-test.</div>
<div class="abs h1" style="left:53px;top:83px">Descriptives</div>
<div class="tdn" style="left:226px;top:90.2px"></div>
<div class="abs h2" style="left:66.4px;top:142.7px">Raincloud Plots</div>
<div class="tdn" style="left:266.2px;top:149.4px"></div>
<div class="abs h3" style="left:80.4px;top:199.8px">posttest</div>
<div class="tdn" style="left:181.4px;top:205.4px"></div>
<div class="abs h2" style="left:66.8px;top:854.9px">Bar Plots</div>
<div class="abs h3" style="left:81px;top:913px">posttest</div>
</div>
<svg id="plot" width="930" height="620" viewBox="2200 400 930 620" style="position:absolute;left:2200px;top:400px">
<g font-family="Liberation Sans, sans-serif" fill="#000">
<path d="M2399.9 435.4V846.9" stroke="#444" stroke-width="1.1" fill="none"/>
<path d="M2384 846.3H2400.4" stroke="#222" stroke-width="1.3"/>
<text transform="translate(2371.4 857.8) scale(.935 1)" font-size="31.6" text-anchor="end">50</text>
<path d="M2384 777.9H2400.4" stroke="#222" stroke-width="1.3"/>
<text transform="translate(2371.4 789.4) scale(.935 1)" font-size="31.6" text-anchor="end">60</text>
<path d="M2384 709.5H2400.4" stroke="#222" stroke-width="1.3"/>
<text transform="translate(2371.4 721.0) scale(.935 1)" font-size="31.6" text-anchor="end">70</text>
<path d="M2384 641.1H2400.4" stroke="#222" stroke-width="1.3"/>
<text transform="translate(2371.4 652.6) scale(.935 1)" font-size="31.6" text-anchor="end">80</text>
<path d="M2384 572.8H2400.4" stroke="#222" stroke-width="1.3"/>
<text transform="translate(2371.4 584.3) scale(.935 1)" font-size="31.6" text-anchor="end">90</text>
<path d="M2384 504.4H2400.4" stroke="#222" stroke-width="1.3"/>
<text transform="translate(2371.4 515.9) scale(.935 1)" font-size="31.6" text-anchor="end">100</text>
<path d="M2384 436.0H2400.4" stroke="#222" stroke-width="1.3"/>
<text transform="translate(2371.4 447.5) scale(.935 1)" font-size="31.6" text-anchor="end">110</text>
<text transform="translate(2297.8 640) rotate(-90)" font-size="36" text-anchor="middle">posttest</text>
<path d="M2454.8 881.4V866.2H2683.2V881.4" stroke="#444" stroke-width="1.2" fill="none"/>
<text x="2455.2" y="915.6" font-size="30.2" text-anchor="middle">Female</text>
<text x="2683.3" y="915.6" font-size="30.2" text-anchor="middle">Male</text>
<text x="2763.5" y="976.2" font-size="36.6" text-anchor="middle">gender</text>
</g>
<g fill="#1b9e77"><circle cx="2470.0" cy="531.3" r="6.95"/><circle cx="2453.8" cy="558.8" r="6.95"/><circle cx="2458.6" cy="572.2" r="6.95"/><circle cx="2462.2" cy="572.2" r="6.95"/><circle cx="2473.4" cy="572.8" r="6.95"/><circle cx="2457.2" cy="579.8" r="6.95"/><circle cx="2441.8" cy="586.2" r="6.95"/><circle cx="2447.4" cy="586.2" r="6.95"/><circle cx="2474.0" cy="592.4" r="6.95"/><circle cx="2457.2" cy="599.4" r="6.95"/><circle cx="2464.2" cy="599.4" r="6.95"/><circle cx="2469.8" cy="599.4" r="6.95"/><circle cx="2446.8" cy="606.4" r="6.95"/><circle cx="2432.5" cy="613.4" r="6.95"/><circle cx="2457.2" cy="620.3" r="6.95"/><circle cx="2469.8" cy="620.3" r="6.95"/><circle cx="2463.3" cy="627.3" r="6.95"/><circle cx="2434.8" cy="633.8" r="6.95"/><circle cx="2441.8" cy="633.8" r="6.95"/><circle cx="2447.4" cy="633.8" r="6.95"/><circle cx="2467.8" cy="633.8" r="6.95"/><circle cx="2441.8" cy="640.8" r="6.95"/><circle cx="2471.2" cy="640.8" r="6.95"/><circle cx="2478.3" cy="640.8" r="6.95"/><circle cx="2472.6" cy="647.8" r="6.95"/><circle cx="2434.8" cy="654.5" r="6.95"/><circle cx="2476.8" cy="654.5" r="6.95"/><circle cx="2467.0" cy="661.5" r="6.95"/><circle cx="2443.2" cy="661.5" r="6.95"/><circle cx="2450.2" cy="661.5" r="6.95"/><circle cx="2455.8" cy="661.5" r="6.95"/><circle cx="2434.2" cy="668.0" r="6.95"/><circle cx="2441.2" cy="668.0" r="6.95"/><circle cx="2448.8" cy="668.0" r="6.95"/><circle cx="2455.8" cy="668.0" r="6.95"/><circle cx="2442.6" cy="675.0" r="6.95"/><circle cx="2475.4" cy="681.9" r="6.95"/><circle cx="2464.2" cy="701.5" r="6.95"/><circle cx="2464.2" cy="715.5" r="6.95"/><circle cx="2461.9" cy="723.0" r="6.95"/></g>
<g fill="#d95f02"><circle cx="2675.2" cy="518.3" r="6.95"/><circle cx="2679.3" cy="539.0" r="6.95"/><circle cx="2681.4" cy="539.0" r="6.95"/><circle cx="2668.3" cy="559.0" r="6.95"/><circle cx="2672.4" cy="559.0" r="6.95"/><circle cx="2695.2" cy="565.2" r="6.95"/><circle cx="2662.4" cy="572.1" r="6.95"/><circle cx="2705.2" cy="572.8" r="6.95"/><circle cx="2675.2" cy="580.3" r="6.95"/><circle cx="2682.8" cy="580.3" r="6.95"/><circle cx="2694.1" cy="586.6" r="6.95"/><circle cx="2699.3" cy="586.6" r="6.95"/><circle cx="2694.1" cy="592.8" r="6.95"/><circle cx="2705.2" cy="592.8" r="6.95"/><circle cx="2662.1" cy="600.3" r="6.95"/><circle cx="2700.0" cy="600.3" r="6.95"/><circle cx="2668.3" cy="606.6" r="6.95"/><circle cx="2701.0" cy="606.6" r="6.95"/><circle cx="2663.1" cy="613.4" r="6.95"/><circle cx="2679.3" cy="613.4" r="6.95"/><circle cx="2687.2" cy="613.4" r="6.95"/><circle cx="2690.7" cy="619.3" r="6.95"/><circle cx="2699.3" cy="620.3" r="6.95"/><circle cx="2661.4" cy="627.2" r="6.95"/><circle cx="2687.2" cy="627.2" r="6.95"/><circle cx="2706.2" cy="627.2" r="6.95"/><circle cx="2692.4" cy="633.1" r="6.95"/><circle cx="2701.0" cy="633.1" r="6.95"/><circle cx="2699.3" cy="640.0" r="6.95"/><circle cx="2678.6" cy="647.9" r="6.95"/><circle cx="2693.1" cy="647.9" r="6.95"/><circle cx="2700.0" cy="647.9" r="6.95"/><circle cx="2661.4" cy="654.8" r="6.95"/><circle cx="2672.4" cy="654.8" r="6.95"/><circle cx="2675.2" cy="661.4" r="6.95"/><circle cx="2694.1" cy="661.4" r="6.95"/><circle cx="2705.5" cy="661.4" r="6.95"/><circle cx="2683.8" cy="668.6" r="6.95"/><circle cx="2664.1" cy="675.2" r="6.95"/><circle cx="2675.9" cy="675.2" r="6.95"/><circle cx="2682.8" cy="675.2" r="6.95"/><circle cx="2695.2" cy="675.2" r="6.95"/><circle cx="2705.5" cy="695.9" r="6.95"/><circle cx="2681.4" cy="729.7" r="6.95"/><circle cx="2689.0" cy="784.8" r="6.95"/></g>
<g stroke="#333" stroke-width="3.8" fill="none"><path d="M2797.1 531.9V600.1M2797.1 661.7V722.9"/><path d="M2785.6 531.9H2808.6M2785.6 722.9H2808.6" stroke="#1c1c1c" stroke-width="3.5"/><rect x="2774.2" y="600.1" width="46.1" height="61.6" fill="#1b9e77" stroke-width="3.2"/><path d="M2774.2 634.3H2820.3" stroke-width="7.6"/></g>
<g stroke="#333" stroke-width="3.8" fill="none"><path d="M2888.6 517.9V593.1M2888.6 656.6V729.9"/><path d="M2877.1 517.9H2900.1M2877.1 729.9H2900.1" stroke="#1c1c1c" stroke-width="3.5"/><rect x="2866.0" y="593.1" width="45.5" height="63.5" fill="#d95f02" stroke-width="3.2"/><path d="M2866.0 620.4H2911.5" stroke-width="7.6"/></g>
<path d="M2979.9 460.2C2980.0 464.1 2980.0 477.3 2980.3 483.9C2980.6 490.5 2980.7 494.4 2981.5 499.7C2982.3 505.0 2983.6 510.7 2984.9 515.6C2986.2 520.5 2987.7 525.0 2989.4 529.1C2991.1 533.2 2992.4 536.6 2995.0 540.4C2997.6 544.2 3001.2 548.3 3005.2 551.7C3009.2 555.1 3014.3 558.2 3018.8 560.8C3023.3 563.4 3028.2 565.4 3032.3 567.5C3036.4 569.6 3039.4 571.1 3043.6 573.2C3047.8 575.3 3053.0 577.5 3057.2 580.0C3061.3 582.5 3065.5 585.3 3068.5 587.9C3071.5 590.5 3073.6 592.8 3075.3 595.8C3077.0 598.8 3077.6 602.8 3078.7 606.0C3079.8 609.2 3080.4 611.6 3082.1 615.0C3083.8 618.4 3086.9 623.3 3088.8 626.3C3090.7 629.3 3092.4 631.0 3093.4 633.2C3094.4 635.4 3094.9 637.1 3094.9 639.4C3094.9 641.7 3094.6 644.5 3093.2 647.1C3091.8 649.7 3089.3 652.5 3086.4 655.2C3083.5 657.9 3080.2 660.5 3075.7 663.2C3071.2 665.9 3065.3 668.6 3059.5 671.3C3053.7 674.0 3047.0 676.5 3040.7 679.4C3034.4 682.3 3027.1 685.7 3021.9 688.8C3016.8 691.9 3013.0 694.8 3009.8 698.2C3006.7 701.6 3005.0 705.2 3003.0 709.0C3001.0 712.8 2999.7 716.9 2997.7 721.1C2995.7 725.4 2993.1 730.2 2990.9 734.5C2988.8 738.8 2986.4 743.0 2984.8 746.6C2983.2 750.2 2982.2 752.6 2981.5 756.0C2980.8 759.4 2980.7 761.1 2980.4 766.8C2980.2 772.5 2980.1 777.5 2980.0 790.0C2979.9 802.5 2980.0 833.4 2980.0 842.1Z" fill="#1b9e77" fill-opacity="0.5" stroke="#000" stroke-width="1.9" stroke-linejoin="round"/>
<path d="M2979.9 460.2C2980.0 463.0 2979.9 471.7 2980.3 477.1C2980.8 482.6 2981.5 488.0 2982.6 492.9C2983.7 497.8 2985.2 502.0 2987.1 506.5C2989.0 511.0 2991.3 515.4 2993.9 520.1C2996.5 524.8 2999.5 529.9 3002.9 534.8C3006.3 539.7 3010.0 544.8 3014.2 549.5C3018.3 554.2 3023.3 559.0 3027.8 563.0C3032.3 567.0 3036.5 569.4 3041.4 573.2C3046.3 577.0 3051.9 581.7 3057.2 585.6C3062.5 589.5 3068.7 593.5 3073.0 596.9C3077.3 600.3 3080.6 603.1 3083.2 606.0C3085.8 608.9 3087.3 611.4 3088.4 614.0C3089.5 616.6 3089.6 619.1 3089.6 621.5C3089.6 623.9 3089.6 625.4 3088.6 628.5C3087.6 631.6 3086.0 636.4 3083.8 640.4C3081.7 644.4 3079.3 648.5 3075.7 652.5C3072.1 656.5 3067.6 660.8 3062.2 664.6C3056.8 668.4 3049.7 671.9 3043.4 675.3C3037.1 678.6 3030.4 681.6 3024.6 684.7C3018.8 687.9 3012.9 691.1 3008.4 694.2C3003.9 697.4 3000.6 700.0 2997.7 703.6C2994.8 707.2 2992.7 711.5 2990.9 715.7C2989.1 720.0 2988.1 724.6 2986.9 729.1C2985.7 733.6 2984.5 738.6 2983.7 742.6C2982.9 746.6 2982.0 749.8 2982.1 753.4C2982.2 757.0 2983.6 760.1 2984.2 764.1C2984.8 768.1 2985.6 772.7 2985.6 777.6C2985.6 782.5 2984.8 788.3 2984.2 793.7C2983.6 799.1 2982.7 805.0 2982.1 809.9C2981.5 814.8 2981.0 819.3 2980.7 823.3C2980.4 827.3 2980.3 831.0 2980.2 834.1C2980.1 837.2 2980.0 840.8 2980.0 842.1Z" fill="#d95f02" fill-opacity="0.5" stroke="#000" stroke-width="1.9" stroke-linejoin="round"/>
<path d="M2980 460.3V842.2" stroke="#000" stroke-width="2.2"/>
</svg>
<!-- results scrollbars -->
<div class="abs" style="left:3115px;top:1104px;width:30px;height:30px;background:#fff"></div>
<div class="abs" style="left:3115.2px;top:176px;width:28px;height:930px;background:#fff;border-left:1.4px solid #909090;border-bottom:1.4px solid #909090"></div>
<div class="abs" style="left:3118px;top:709px;width:22px;height:224px;background:#c9c9c9"></div>
<div class="abs" style="left:2183.6px;top:1106px;width:931.8px;height:28px;border:1.4px solid #909090;background:#fff"></div>
<div class="abs" style="left:2187.2px;top:1109.2px;width:811.8px;height:21.5px;background:#c9c9c9"></div>
</div>
<!-- ribbon shadow over panels -->
<div class="abs" style="left:2.4px;top:176.2px;width:3139px;height:17px;background:linear-gradient(rgba(0,0,0,.175) 0,rgba(0,0,0,.11) 6px,rgba(0,0,0,.065) 10.5px,rgba(0,0,0,.015) 15px,rgba(0,0,0,0) 17px);pointer-events:none"></div>
<div class="abs" style="left:2.4px;top:174px;width:3139px;height:1px;background:#f3f3f3"></div>
<div class="abs" style="left:11.8px;top:0.85px;width:3119.2px;height:1.1px;background:#111"></div>
</body></html>
